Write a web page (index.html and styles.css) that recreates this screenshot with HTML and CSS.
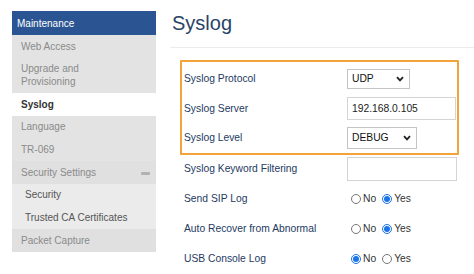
FILE: index.html
```html
<!DOCTYPE html>
<html lang="en">
<head>
    <meta charset="UTF-8">
    <title>Maintenance - Syslog</title>
    <link rel="stylesheet" href="styles.css">
</head>
<body>
    <div class="page">
        <nav class="sidebar">
            <div class="side-head">Maintenance</div>
            <a class="side-item">Web Access</a>
            <a class="side-item">Upgrade and<br>Provisioning</a>
            <a class="side-item active">Syslog</a>
            <a class="side-item">Language</a>
            <a class="side-item">TR-069</a>
            <a class="side-item parent">Security Settings <span class="collapse-icon"></span></a>
            <a class="side-item sub">Security</a>
            <a class="side-item sub">Trusted CA Certificates</a>
            <a class="side-item last">Packet Capture</a>
        </nav>

        <main class="content">
            <h1 class="page-title">Syslog</h1>

            <!-- bloco destacado -->
            <div class="highlight">
                <div class="row">
                    <label>Syslog Protocol</label>
                    <div class="select-wrap w-udp">
                        <select><option>UDP</option></select>
                        <svg class="chev" width="8" height="6" viewBox="0 0 8 6"><path d="M1 1.2 L4 4.4 L7 1.2" fill="none" stroke="#222" stroke-width="1.8"/></svg>
                    </div>
                </div>
                <div class="row">
                    <label>Syslog Server</label>
                    <input class="text-input" type="text" value="192.168.0.105">
                </div>
                <div class="row">
                    <label>Syslog Level</label>
                    <div class="select-wrap w-debug">
                        <select><option>DEBUG</option></select>
                        <svg class="chev" width="8" height="6" viewBox="0 0 8 6"><path d="M1 1.2 L4 4.4 L7 1.2" fill="none" stroke="#222" stroke-width="1.8"/></svg>
                    </div>
                </div>
            </div>

            <div class="row plain">
                <label>Syslog Keyword Filtering</label>
                <input class="text-input tall" type="text" value="">
            </div>
            <div class="row plain">
                <label>Send SIP Log</label>
                <div class="radios">
                    <input type="radio" name="sip" id="sip-no"><label for="sip-no">No</label>
                    <input type="radio" name="sip" id="sip-yes" checked><label for="sip-yes">Yes</label>
                </div>
            </div>
            <div class="row plain">
                <label>Auto Recover from Abnormal</label>
                <div class="radios">
                    <input type="radio" name="auto" id="auto-no"><label for="auto-no">No</label>
                    <input type="radio" name="auto" id="auto-yes" checked><label for="auto-yes">Yes</label>
                </div>
            </div>
            <div class="row plain">
                <label>USB Console Log</label>
                <div class="radios">
                    <input type="radio" name="usb" id="usb-no" checked><label for="usb-no">No</label>
                    <input type="radio" name="usb" id="usb-yes"><label for="usb-yes">Yes</label>
                </div>
            </div>
        </main>
    </div>
</body>
</html>
```

FILE: styles.css
```css
body {
    margin: 0;
    background-color: #ffffff;
    font-family: "Liberation Sans", Arial, sans-serif;
    overflow: hidden;
}
.page {
    display: flex;
    align-items: flex-start;
    padding: 11px 0 0 12px;
}

/* menu lateral */
.sidebar {
    width: 144px;
    flex-shrink: 0;
    display: flex;
    flex-direction: column;
    background-color: #e3e3e3;
    font-size: 10px;
}
.side-head {
    height: 24px;
    line-height: 25px;
    padding-left: 5px;
    background-color: #2b5592;
    color: #ffffff;
}
.side-item {
    display: flex;
    align-items: center;
    padding: 5.5px 9px 4.5px;
    line-height: 12.7px;
    color: #8a8a8a;
}
.side-item.active {
    background-color: #ffffff;
    color: #333333;
    font-weight: bold;
}
.side-item.parent {
    justify-content: space-between;
    background-color: #e0e0e0;
}
.side-item.sub {
    padding-left: 13px;
    background-color: #ebebeb;
    color: #555555;
}
.side-item.last {
    background-color: #e0e0e0;
}
.collapse-icon {
    width: 9px;
    height: 3px;
    border-radius: 1px;
    background-color: #b2b2b2;
    margin-right: -3px;
}

/* conteudo */
.content {
    flex: 1;
    margin-left: 14px;
}
.page-title {
    margin: 0;
    padding: 1px 0 12px 2px;
    font-size: 20px;
    line-height: 23px;
    font-weight: normal;
    color: #2a4467;
    border-bottom: 1px solid #ececec;
}
.highlight {
    margin: 12px 15px -1px 10px;
    padding: 2px 0 0 2px;
    border: 2px solid #f2a43a;
    border-radius: 1px;
}
.row {
    display: flex;
    align-items: center;
    height: 29.5px;
    font-size: 10.3px;
    color: #1e3a62;
}
.row.plain {
    margin-left: 14px;
    height: 30px;
}
.row > label {
    width: 163px;
    flex-shrink: 0;
}
.select-wrap {
    position: relative;
    height: 20px;
}
.select-wrap select {
    appearance: none;
    width: 100%;
    height: 100%;
    margin: 0;
    padding: 0 0 0 4px;
    border: 1px solid #c4c4c4;
    border-radius: 0;
    background-color: #ffffff;
    font-family: "Liberation Sans", Arial, sans-serif;
    font-size: 10.3px;
    color: #111111;
}
.select-wrap .chev {
    position: absolute;
    right: 6px;
    top: 7px;
    pointer-events: none;
}
.w-udp {
    width: 63px;
}
.w-debug {
    width: 70px;
    height: 22px;
}
.w-debug .chev {
    top: 8px;
}
.text-input {
    box-sizing: border-box;
    width: 109px;
    height: 23px;
    margin: 0;
    padding: 0 4px;
    border: 1px solid #d4d4d4;
    font-family: "Liberation Sans", Arial, sans-serif;
    font-size: 10.3px;
    color: #222222;
}
.text-input.tall {
    width: 110px;
    height: 24px;
}
.radios {
    display: flex;
    align-items: center;
    color: #333333;
}
.radios input {
    width: 10px;
    height: 10px;
    margin: 0 2px 0 4px;
    accent-color: #1a73e8;
}
.radios label {
    margin-right: 2px;
}
```
